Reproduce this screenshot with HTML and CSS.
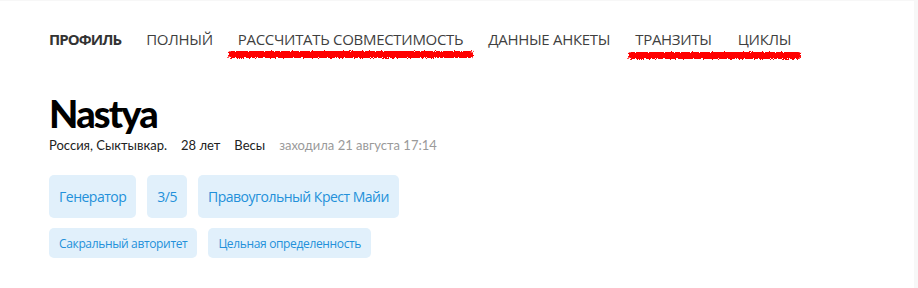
FILE: index.html
```html
<!DOCTYPE html>
<html lang="ru">
<head>
<meta charset="utf-8">
<link rel="stylesheet" href="styles.css">
</head>
<body>
<svg class="defs" width="0" height="0" aria-hidden="true">
  <filter id="rough" x="-5%" y="-100%" width="110%" height="300%">
    <feTurbulence type="fractalNoise" baseFrequency="0.9" numOctaves="2" seed="3" result="n"/>
    <feDisplacementMap in="SourceGraphic" in2="n" scale="4" xChannelSelector="R" yChannelSelector="G"/>
  </filter>
</svg>
<div class="card">
  <nav class="tabs">
    <a class="tab active">ПРОФИЛЬ</a>
    <a class="tab">ПОЛНЫЙ</a>
    <a class="tab marked">РАССЧИТАТЬ СОВМЕСТИМОСТЬ</a>
    <a class="tab">ДАННЫЕ АНКЕТЫ</a>
    <span class="group marked">
      <a class="tab">ТРАНЗИТЫ</a>
      <a class="tab">ЦИКЛЫ</a>
    </span>
  </nav>
  <h1 class="name">Nastya</h1>
  <div class="info">
    <span>Россия, Сыктывкар.</span>
    <span>28 лет</span>
    <span>Весы</span>
    <span class="muted">заходила 21 августа 17:14</span>
  </div>
  <div class="tags big">
    <span class="tag">Генератор</span>
    <span class="tag">3/5</span>
    <span class="tag">Правоугольный Крест Майи</span>
  </div>
  <div class="tags small">
    <span class="tag">Сакральный авторитет</span>
    <span class="tag">Цельная определенность</span>
  </div>
</div>
</body>
</html>
```
FILE: styles.css
```css
html, body {
  margin: 0;
  padding: 0;
}
body {
  background: #f7f7f7;
  width: 918px;
  height: 288px;
  overflow: hidden;
  font-family: "Open Sans", "Noto Sans", sans-serif;
}
.defs {
  position: absolute;
}
.card {
  background: #fff;
  margin: 1px 4px 0 0;
  height: 287px;
  padding: 0 0 0 49px;
  box-sizing: border-box;
}
.tabs {
  display: flex;
  gap: 25px;
  padding-top: 26px;
  height: 60px;
  box-sizing: border-box;
  font-size: 15px;
  line-height: 24px;
}
.tab {
  color: #3f3f3f;
  letter-spacing: -0.3px;
}
.tab.active {
  font-weight: 700;
  color: #333;
  letter-spacing: -0.9px;
}
.group {
  display: flex;
  gap: 26px;
}
.marked {
  position: relative;
}
.marked::after {
  content: "";
  position: absolute;
  left: -10px;
  right: -10px;
  top: 24px;
  height: 7px;
  background: #ff0000;
  border-radius: 3px;
  filter: url(#rough);
}
.group.marked::after {
  left: -7px;
  top: 25px;
}
.name {
  margin: 33px 0 0;
  font-family: "Lato", sans-serif;
  font-weight: 900;
  font-size: 38px;
  line-height: 38px;
  color: #000;
  letter-spacing: -1.8px;
}
.info {
  display: flex;
  gap: 14px;
  margin-top: 5px;
  font-family: "Lato", sans-serif;
  font-size: 13px;
  line-height: 16px;
  color: #222;
}
.info .muted {
  color: #9a9a9a;
}
.tags {
  display: flex;
  gap: 11px;
}
.tag {
  background: #e1f0fb;
  color: #2390da;
  border-radius: 5px;
  display: inline-flex;
  align-items: center;
}
.tags.big {
  margin-top: 22px;
}
.tags.big .tag {
  height: 43px;
  padding: 0 10px;
  font-size: 14px;
  letter-spacing: -0.5px;
}
.tags.small {
  margin-top: 10px;
}
.tags.small .tag {
  height: 30px;
  padding: 0 10px;
  font-size: 12px;
  letter-spacing: -0.35px;
}
```
